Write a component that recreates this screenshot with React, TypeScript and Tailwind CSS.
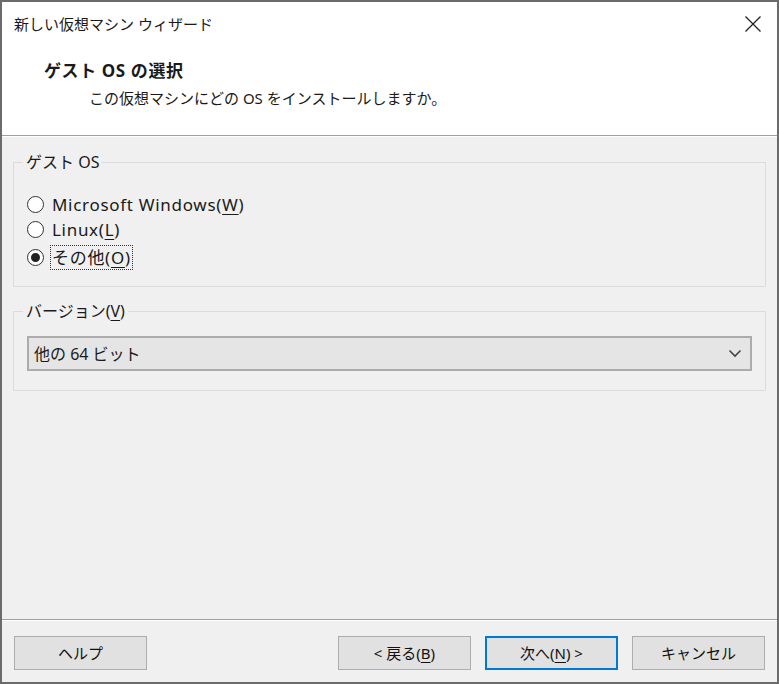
import React from "react";

const font = { fontFamily: '"Noto Sans", "Noto Sans CJK JP", sans-serif' };

function Radio({ checked, label, mnemonic, focus }: { checked?: boolean; label: string; mnemonic: string; focus?: boolean }) {
  return (
    <div className="flex h-[25px] items-center">
      <div className="flex h-[17px] w-[17px] shrink-0 items-center justify-center rounded-full border border-[#333333] bg-white">
        {checked && <div className="h-[9px] w-[9px] rounded-full bg-[#222222]" />}
      </div>
      <div className={`ml-[7px] flex h-[23px] items-center px-[1px] tracking-[0.7px] ${focus ? "outline-1 outline-dotted outline-[#333333]" : ""}`}>
        <span>{label}(</span>
        <span className="underline decoration-1 underline-offset-[3px]">{mnemonic}</span>
        <span>)</span>
      </div>
    </div>
  );
}

function Button({ children, primary }: { children: React.ReactNode; primary?: boolean }) {
  return (
    <div
      className={`flex h-[34px] w-[133px] items-center justify-center bg-[#e1e1e1] text-[15px] text-[#111] ${
        primary ? "border-2 border-[#0078d7]" : "border border-[#adadad]"
      }`}
    >
      {children}
    </div>
  );
}

export default function App() {
  return (
    <div style={font} className="flex h-[684px] w-[779px] flex-col border-2 border-[#6b6b6b] bg-[#f0f0f0] text-[#1a1a1a]">
      <div className="flex shrink-0 flex-col bg-white">
        <div className="flex h-[44px] items-center justify-between pl-[12px] pr-[15px]">
          <span className="text-[15px]">新しい仮想マシン ウィザード</span>
          <svg width="18" height="18" viewBox="0 0 18 18">
            <path d="M1.5 1.5 L16.5 16.5 M16.5 1.5 L1.5 16.5" stroke="#222" strokeWidth="1.3" fill="none" />
          </svg>
        </div>
        <div className="flex h-[89px] flex-col pl-[42px] pt-[12px]">
          <span className="text-[17px] font-bold leading-[26px] tracking-[0.6px]">ゲスト OS の選択</span>
          <span className="ml-[45px] mt-[3px] text-[15px] leading-[22px]">この仮想マシンにどの OS をインストールしますか。</span>
        </div>
      </div>
      <div className="h-[2px] shrink-0 border-t border-[#a0a0a0] bg-white" />
      <div className="flex flex-1 flex-col px-[11px] pt-[15px]">
        <fieldset className="h-[135px] border border-[#dcdcdc] p-0">
          <legend className="ml-[9px] px-[3px] text-[16px] leading-[20px]">ゲスト OS</legend>
          <div className="mt-[20px] flex flex-col pl-[13px] text-[17px]">
            <Radio label="Microsoft Windows" mnemonic="W" />
            <Radio label="Linux" mnemonic="L" />
            <div className="mt-[3px]">
              <Radio label="その他" mnemonic="O" checked focus />
            </div>
          </div>
        </fieldset>
        <fieldset className="mt-[14px] h-[90px] border border-[#dcdcdc] p-0">
          <legend className="ml-[9px] px-[3px] text-[16px] leading-[20px]">
            バージョン(<span className="underline decoration-1 underline-offset-[3px]">V</span>)
          </legend>
          <div className="mx-[13px] mt-[15px] flex h-[35px] items-center justify-between border-[2px] border-[#acacac] bg-[#e5e5e5] pl-[5px] pr-[8px] text-[16px]">
            <span>他の 64 ビット</span>
            <svg width="14" height="9" viewBox="0 0 14 9">
              <path d="M1.5 1.5 L7 7 L12.5 1.5" stroke="#444" strokeWidth="1.6" fill="none" />
            </svg>
          </div>
        </fieldset>
      </div>
      <div className="h-[2px] shrink-0 border-t border-[#a0a0a0] bg-white" />
      <div className="flex h-[61px] shrink-0 items-start pl-[12px] pr-[12px] pt-[15px]">
        <Button>ヘルプ</Button>
        <div className="flex-1" />
        <div className="flex gap-[14px]">
          <Button>
            &lt; 戻る(<span className="underline decoration-1 underline-offset-[3px]">B</span>)
          </Button>
          <Button primary>
            次へ(<span className="underline decoration-1 underline-offset-[3px]">N</span>) &gt;
          </Button>
          <Button>キャンセル</Button>
        </div>
      </div>
    </div>
  );
}
